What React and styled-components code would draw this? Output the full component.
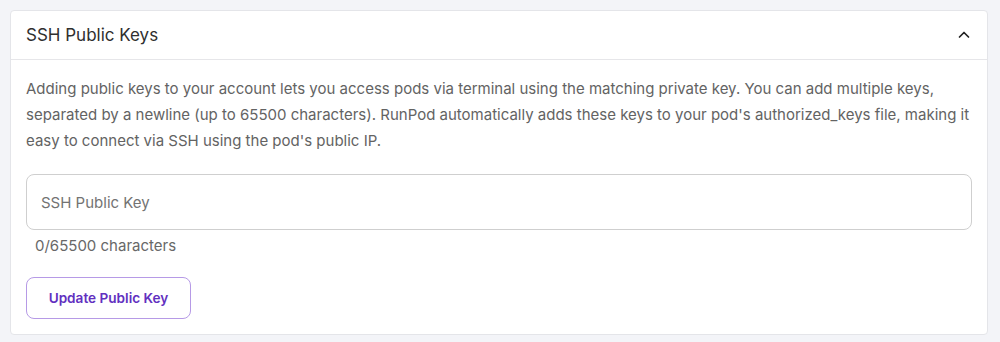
import React from "react";
import styled, { createGlobalStyle } from "styled-components";

const Global = createGlobalStyle`
  html, body { margin: 0; padding: 0; background: #f3f4f8; }
  body { font-family: Inter, "Noto Sans", sans-serif; -webkit-font-smoothing: antialiased; }
  * { box-sizing: border-box; }
`;

const Page = styled.div`
  padding: 10px 12px 8px 10px;
`;

const Card = styled.section`
  background: #fff;
  border: 1px solid #e4e5e9;
  border-radius: 4px;
`;

const Header = styled.div`
  height: 49px;
  display: flex;
  align-items: center;
  justify-content: space-between;
  padding: 0 16px 0 15px;
  border-bottom: 1px solid #e6e6e9;
`;

const Title = styled.h2`
  margin: 0;
  font-size: 17px;
  font-weight: 400;
  color: #2f2f2f;
`;

const ChevronButton = styled.button`
  border: 0;
  background: none;
  padding: 0;
  display: flex;
  align-items: center;
  color: #222;
`;

const Body = styled.div`
  padding: 16px 15px 15px 15px;
  display: flex;
  flex-direction: column;
  align-items: flex-start;
`;

const Description = styled.p`
  margin: 0 0 20px;
  font-size: 15px;
  line-height: 26px;
  color: #636363;
`;

const KeyInput = styled.input`
  width: 100%;
  height: 56px;
  border: 1px solid #cfcfcf;
  border-radius: 8px;
  padding: 0 14px;
  font-family: inherit;
  font-size: 15px;
  color: #333;
  outline: none;
  &::placeholder { color: #737373; }
`;

const Counter = styled.div`
  margin: 6px 0 0 9px;
  font-size: 15px;
  line-height: 20px;
  color: #686868;
`;

const UpdateButton = styled.button`
  margin-top: 21px;
  width: 165px;
  height: 42px;
  border: 1px solid #b69ae6;
  border-radius: 8px;
  background: #fff;
  color: #6230c0;
  font-family: inherit;
  font-size: 13.6px;
  font-weight: 600;
  cursor: pointer;
`;

export default function App() {
  return (
    <>
      <Global />
      <Page>
        <Card>
          <Header>
            <Title>SSH Public Keys</Title>
            <ChevronButton aria-label="Collapse">
              <svg width="14" height="14" viewBox="0 0 14 14" fill="none">
                <path d="M2.5 9 L7 4.5 L11.5 9" stroke="currentColor" strokeWidth="1.7" strokeLinecap="round" strokeLinejoin="round" />
              </svg>
            </ChevronButton>
          </Header>
          <Body>
            <Description>
              Adding public keys to your account lets you access pods via terminal using the matching private key. You can add multiple keys, separated by a newline (up to 65500 characters). RunPod automatically adds these keys to your pod's authorized_keys file, making it easy to connect via SSH using the pod's public IP.
            </Description>
            <KeyInput placeholder="SSH Public Key" />
            <Counter>0/65500 characters</Counter>
            <UpdateButton>Update Public Key</UpdateButton>
          </Body>
        </Card>
      </Page>
    </>
  );
}
